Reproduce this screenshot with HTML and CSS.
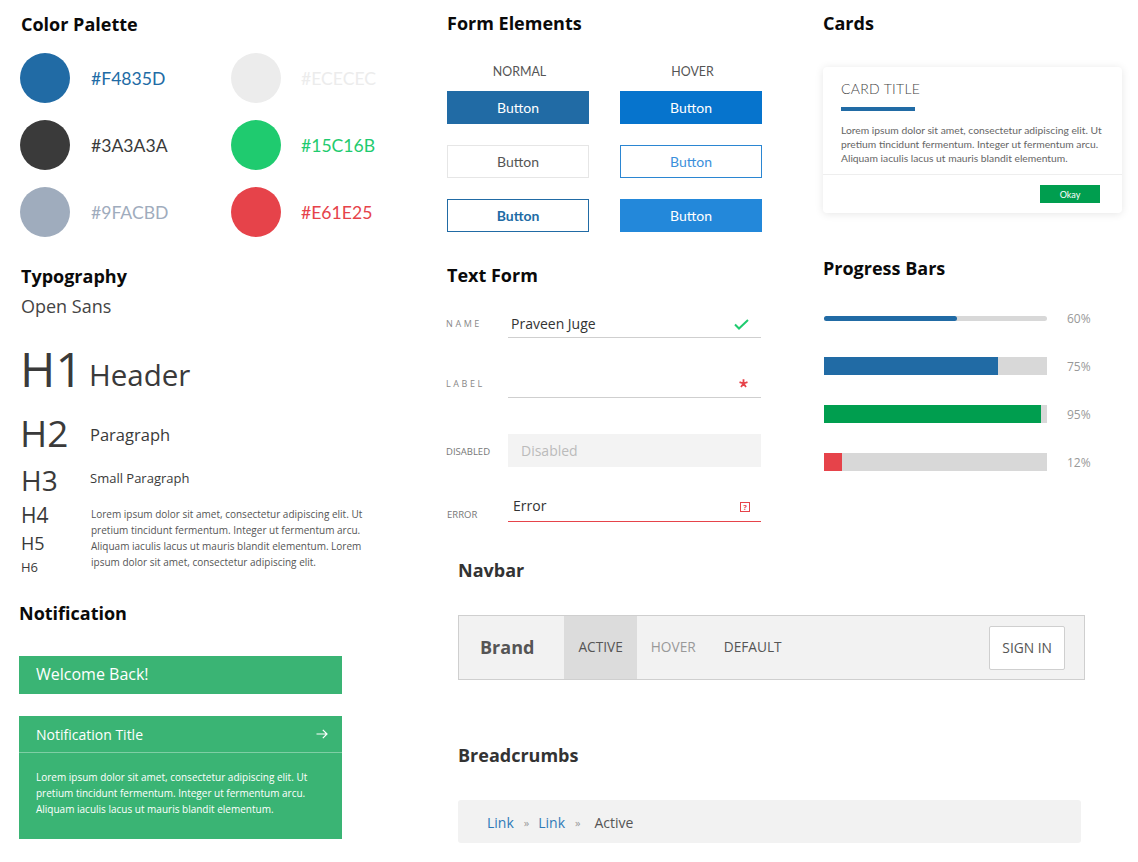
FILE: index.html
```html
<!DOCTYPE html>
<html lang="en">
<head>
<meta charset="utf-8">
<title>Style Guide</title>
<link rel="stylesheet" href="styles.css">
</head>
<body>
<div class="page">
  <section class="col-left">
    <h2 class="title t-palette">Color Palette</h2>
    <div class="palette">
      <div class="swatch c-blue"><span class="dot"></span><span class="hex">#F4835D</span></div>
      <div class="swatch c-light"><span class="dot"></span><span class="hex">#ECECEC</span></div>
      <div class="swatch c-dark"><span class="dot"></span><span class="hex">#3A3A3A</span></div>
      <div class="swatch c-green"><span class="dot"></span><span class="hex">#15C16B</span></div>
      <div class="swatch c-gray"><span class="dot"></span><span class="hex">#9FACBD</span></div>
      <div class="swatch c-red"><span class="dot"></span><span class="hex">#E61E25</span></div>
    </div>

    <h2 class="title t-type">Typography</h2>
    <div class="font-name">Open Sans</div>
    <div class="type-rows">
      <div class="trow r1"><span class="tag">H1</span><span class="sample">Header</span></div>
      <div class="trow r2"><span class="tag">H2</span><span class="sample">Paragraph</span></div>
      <div class="trow r3"><span class="tag">H3</span><span class="sample">Small Paragraph</span></div>
      <div class="r4">
        <div class="hcol">
          <div class="h4">H4</div>
          <div class="h5">H5</div>
          <div class="h6">H6</div>
        </div>
        <p class="lorem">Lorem ipsum dolor sit amet, consectetur adipiscing elit. Ut<br>pretium tincidunt fermentum. Integer ut fermentum arcu.<br>Aliquam iaculis lacus ut mauris blandit elementum. Lorem<br>ipsum dolor sit amet, consectetur adipiscing elit.</p>
      </div>
    </div>

    <h2 class="title t-notif">Notification</h2>
    <div class="welcome">Welcome Back!</div>
    <div class="ncard">
      <div class="nhead">
        <span>Notification Title</span>
        <svg class="arrow" width="12" height="10" viewBox="0 0 12 10"><path d="M0.5 5H11M6.8 0.8L11 5L6.8 9.2" fill="none" stroke="#fff" stroke-width="1.2"/></svg>
      </div>
      <div class="nbody">Lorem ipsum dolor sit amet, consectetur adipiscing elit. Ut<br>pretium tincidunt fermentum. Integer ut fermentum arcu.<br>Aliquam iaculis lacus ut mauris blandit elementum.</div>
    </div>
  </section>

  <div class="right">
    <div class="right-top">
      <section class="col-mid">
        <h2 class="title">Form Elements</h2>
        <div class="state-labels"><span>NORMAL</span><span>HOVER</span></div>
        <div class="btn-grid">
          <button class="btn btn-primary">Button</button>
          <button class="btn btn-primary-hover">Button</button>
          <button class="btn btn-ghost">Button</button>
          <button class="btn btn-ghost-hover">Button</button>
          <button class="btn btn-outline">Button</button>
          <button class="btn btn-light">Button</button>
        </div>

        <h2 class="title t-textform">Text Form</h2>
        <div class="field f-name">
          <span class="flabel spaced">NAME</span>
          <div class="finput"><span class="val">Praveen Juge</span>
            <svg class="check" width="15" height="11" viewBox="0 0 15 11"><path d="M1 5.5L5 9.5L14 1" fill="none" stroke="#1FCB6F" stroke-width="2"/></svg>
          </div>
        </div>
        <div class="field f-label">
          <span class="flabel spaced">LABEL</span>
          <div class="finput"><span class="val"></span>
            <svg class="star" width="9" height="9" viewBox="0 0 9 9"><path d="M4.5 4.5V0.3M4.5 4.5L8.5 3.2M4.5 4.5L7 8M4.5 4.5L2 8M4.5 4.5L0.5 3.2" fill="none" stroke="#E6434A" stroke-width="1.8"/></svg>
          </div>
        </div>
        <div class="field f-disabled">
          <span class="flabel">DISABLED</span>
          <div class="finput disabled"><span class="val">Disabled</span></div>
        </div>
        <div class="field f-error">
          <span class="flabel">ERROR</span>
          <div class="finput error"><span class="val">Error</span><span class="qbox">?</span></div>
        </div>
      </section>

      <section class="col-right">
        <h2 class="title">Cards</h2>
        <div class="card">
          <div class="card-body">
            <div class="card-title">CARD TITLE</div>
            <div class="card-bar"></div>
            <p class="card-text">Lorem ipsum dolor sit amet, consectetur adipiscing elit. Ut<br>pretium tincidunt fermentum. Integer ut fermentum arcu.<br>Aliquam iaculis lacus ut mauris blandit elementum.</p>
          </div>
          <div class="card-foot"><button class="okay">Okay</button></div>
        </div>

        <h2 class="title t-progress">Progress Bars</h2>
        <div class="prow p1"><div class="track"><div class="fill f-blue" style="width:133px"></div></div><span class="pct">60%</span></div>
        <div class="prow"><div class="track"><div class="fill f-blue" style="width:174px"></div></div><span class="pct">75%</span></div>
        <div class="prow"><div class="track"><div class="fill f-green" style="width:217px"></div></div><span class="pct">95%</span></div>
        <div class="prow"><div class="track"><div class="fill f-red" style="width:18px"></div></div><span class="pct">12%</span></div>
      </section>
    </div>

    <section class="lower">
      <h2 class="title t-nav">Navbar</h2>
      <nav class="navbar">
        <span class="brand">Brand</span>
        <span class="nav-item active">ACTIVE</span>
        <span class="nav-item hover">HOVER</span>
        <span class="nav-item">DEFAULT</span>
        <button class="signin">SIGN IN</button>
      </nav>

      <h2 class="title t-crumbs">Breadcrumbs</h2>
      <div class="crumbs">
        <a class="crumb-link">Link</a><span class="sep">»</span><a class="crumb-link">Link</a><span class="sep">»</span><span class="crumb-active">Active</span>
      </div>
    </section>
  </div>
</div>
</body>
</html>
```

FILE: styles.css
```css
html, body { margin: 0; padding: 0; background: #fff; }
body { font-family: "Open Sans", "Noto Sans", sans-serif; color: #333; }

.page { display: flex; padding: 11px 0 0 20px; width: 1138px; box-sizing: border-box; }
.col-left { width: 427px; flex: none; }
.right { flex: 1; }
.right-top { display: flex; }
.col-mid { width: 376px; flex: none; }
.col-right { width: 300px; flex: none; }

.title { font: 700 18px/24px "Open Sans", sans-serif; margin: 0; color: #0a0a0a; }

/* palette */
.t-palette { margin-top: 1px; margin-left: 1px; }
.palette { display: grid; grid-template-columns: 211px 1fr; row-gap: 17px; margin-top: 17px; }
.swatch { display: flex; align-items: center; height: 50px; }
.dot { width: 50px; height: 50px; border-radius: 50%; flex: none; }
.hex { margin-left: 21px; font: 17.6px "Lato", sans-serif; }
.c-light .hex, .c-green .hex, .c-red .hex { margin-left: 20px; }
.c-blue .dot { background: #216BA5; } .c-blue .hex { color: #216BA5; }
.c-light .dot { background: #ECECEC; } .c-light .hex { color: #ECECEC; }
.c-dark .dot { background: #3A3A3A; } .c-dark .hex { color: #3A3A3A; }
.c-green .dot { background: #1FCB6F; } .c-green .hex { color: #1FCB6F; }
.c-gray .dot { background: #9FACBD; } .c-gray .hex { color: #9FACBD; }
.c-red .dot { background: #E6434A; } .c-red .hex { color: #E6434A; }

/* typography */
.t-type { margin-top: 27px; margin-left: 1px; }
.font-name { font-size: 18px; line-height: 24px; color: #444; margin-top: 6px; margin-left: 1px; }
.type-rows { margin-top: 23px; color: #3a3a3a; }
.trow { display: grid; grid-template-columns: 70px auto; align-items: start; justify-content: start; }
.r1 .tag { font-size: 48px; line-height: 56px; }
.r1 .sample { font-size: 29.5px; line-height: 40px; margin-top: 14px; margin-left: -1px; }
.r2 { margin-top: 14px; }
.r2 .tag { font-size: 37px; line-height: 44px; }
.r2 .sample { font-size: 16.5px; line-height: 24px; margin-top: 12px; }
.r3 { margin-top: 8px; }
.r3 .tag { font-size: 28px; line-height: 34px; margin-left: 1px; }
.r3 .sample { font-size: 13px; line-height: 20px; margin-top: 5px; }
.r4 { display: flex; margin-top: 4px; }
.hcol { width: 70px; flex: none; }
.h4 { font-size: 21px; line-height: 28px; margin-left: 1px; }
.h5 { font-size: 18px; line-height: 28px; margin-left: 1px; }
.h6 { font-size: 13px; line-height: 20px; margin-left: 1px; }
.lorem { margin: 5px 0 0 1px; font-size: 10px; line-height: 16px; color: #555; white-space: nowrap; }

/* notification */
.t-notif { margin-top: 24px; margin-left: -1px; }
.welcome { margin-top: 31px; margin-left: -1px; width: 323px; height: 38px; box-sizing: border-box;
  background: #3AB474; color: #fff; font-size: 16px; line-height: 36px; padding-left: 17px; }
.ncard { margin-top: 22px; margin-left: -1px; width: 323px; background: #3AB474; color: #fff; }
.nhead { height: 37px; box-sizing: border-box; display: flex; align-items: center; justify-content: space-between;
  padding: 0 14px 0 17px; border-bottom: 1px solid rgba(255,255,255,0.35); font-size: 14px; }
.arrow { display: block; }
.nbody { height: 86px; box-sizing: border-box; padding: 16px 17px 0; font-size: 10px; line-height: 16px; white-space: nowrap; }

/* form elements */
.state-labels { display: grid; grid-template-columns: 142px 142px; column-gap: 31px; margin-top: 27px;
  font: 12.4px/20px "Lato", sans-serif; color: #555; text-align: center; }
.state-labels span { padding-left: 3px; }
.btn-grid { display: grid; grid-template-columns: 142px 142px; column-gap: 31px; row-gap: 21px; margin-top: 9px; }
.btn { height: 33px; box-sizing: border-box; border: 0; margin: 0; padding: 0; font: 14px "Lato", sans-serif;
  display: flex; align-items: center; justify-content: center; }
.btn-primary { background: #216BA5; color: #fff; }
.btn-primary-hover { background: #0674CD; color: #fff; }
.btn-ghost { background: #fff; border: 1px solid #e6e6e6; color: #555; }
.btn-ghost-hover { background: #fff; border: 1px solid #2B86D2; color: #3A90DB; }
.btn-outline { background: #fff; border: 1.5px solid #216BA5; color: #216BA5; font-weight: 700; }
.btn-light { background: #2388DA; color: #fff; }

/* text form */
.t-textform { margin-top: 31px; }
.field { display: flex; align-items: flex-end; }
.flabel { width: 62px; flex: none; font-size: 9px; line-height: 12px; color: #888; margin-bottom: 8px; margin-left: -1px; }
.spaced { letter-spacing: 2.6px; }
.finput { width: 253px; height: 33px; box-sizing: border-box; border-bottom: 1px solid #cfcfcf;
  display: flex; align-items: flex-end; justify-content: space-between; padding: 0 12px 3px 3px; }
.val { font-size: 14px; line-height: 20px; color: #333; }
.f-name { margin-top: 18px; }
.check { margin-bottom: 4px; margin-right: 0; }
.f-label { margin-top: 27px; }
.star { margin-bottom: 6px; margin-right: 1px; }
.f-disabled { margin-top: 36px; align-items: center; }
.f-disabled .flabel { margin-bottom: 0; font-size: 9.5px; color: #777; margin-top: 2px; }
.finput.disabled { border: 0; background: #f3f3f3; align-items: center; padding: 0 0 0 13px; }
.finput.disabled .val { color: #bbb; }
.f-error { margin-top: 22px; }
.f-error .flabel { margin-bottom: 1px; font-size: 9.5px; color: #777; margin-left: 0; width: 61px; }
.finput.error { border-bottom-color: #E6434A; padding: 0 11px 5px 5px; }
.qbox { width: 10px; height: 10px; box-sizing: border-box; border: 1px solid #E6434A; color: #E6434A;
  font: 700 7.5px/8px "Open Sans", sans-serif; text-align: center; margin-bottom: 4px; }

/* cards */
.card { margin-top: 32px; width: 299px; border-radius: 4px; background: #fff;
  box-shadow: 0 1px 8px rgba(0,0,0,0.10); }
.card-body { padding: 12px 18px 0; height: 108px; box-sizing: border-box; border-bottom: 1px solid #eeeeee; }
.card-title { font: 300 14px/20px "Lato", sans-serif; color: #444; letter-spacing: 0.3px; }
.card-bar { width: 74px; height: 4px; background: #216BA5; margin-top: 8px; }
.card-text { margin: 12px 0 0; font: 10.3px/14px "Lato", sans-serif; color: #666; white-space: nowrap; }
.card-foot { display: flex; justify-content: flex-end; padding: 10px 22px 10px; }
.okay { width: 60px; height: 18px; border: 0; padding: 0; background: #009E4F; color: #fff; font: 9px "Lato", sans-serif; }

/* progress */
.t-progress { margin-top: 43px; }
.prow { display: flex; align-items: center; height: 18px; margin-top: 30px; margin-left: 1px; }
.prow.p1 { margin-top: 29px; }
.track { width: 223px; height: 18px; background: #d8d8d8; flex: none; }
.fill { height: 100%; }
.p1 .track { height: 5px; border-radius: 3px; }
.p1 .fill { border-radius: 3px; }
.f-blue { background: #216BA5; }
.f-green { background: #009E4F; }
.f-red { background: #E6434A; }
.pct { margin-left: 20px; font-size: 12px; color: #999; }

/* navbar */
.lower { padding-left: 11px; }
.t-nav { margin-top: 36px; color: #333; }
.navbar { margin-top: 33px; width: 627px; height: 65px; box-sizing: border-box; border: 1px solid #cfcfcf;
  background: #f2f2f2; display: flex; align-items: stretch; }
.brand { display: flex; align-items: center; padding: 0 30px 2px 21px; font-weight: 700; font-size: 18px; color: #555; }
.nav-item { display: flex; align-items: center; padding: 0 14px 2px; font-size: 13.7px; color: #555; }
.nav-item.active { background: #dcdcdc; }
.nav-item.hover { color: #999; }
.signin { margin: 0 19px 0 auto; align-self: center; height: 44px; padding: 0 12px; border: 1px solid #cfcfcf;
  border-radius: 2px; background: #fff; font: 13.8px "Open Sans", sans-serif; color: #555; }

/* breadcrumbs */
.t-crumbs { margin-top: 63px; color: #333; }
.crumbs { margin-top: 33px; width: 623px; height: 43px; box-sizing: border-box; background: #f2f2f2; border-radius: 3px;
  display: flex; align-items: center; padding: 1px 0 0 29px; font-size: 14px; }
.crumb-link { color: #2F7AB8; }
.sep { color: #999; font-size: 11px; margin: 0 9px 0 10px; }
.crumb-active { color: #555; margin-left: 5px; }
```
